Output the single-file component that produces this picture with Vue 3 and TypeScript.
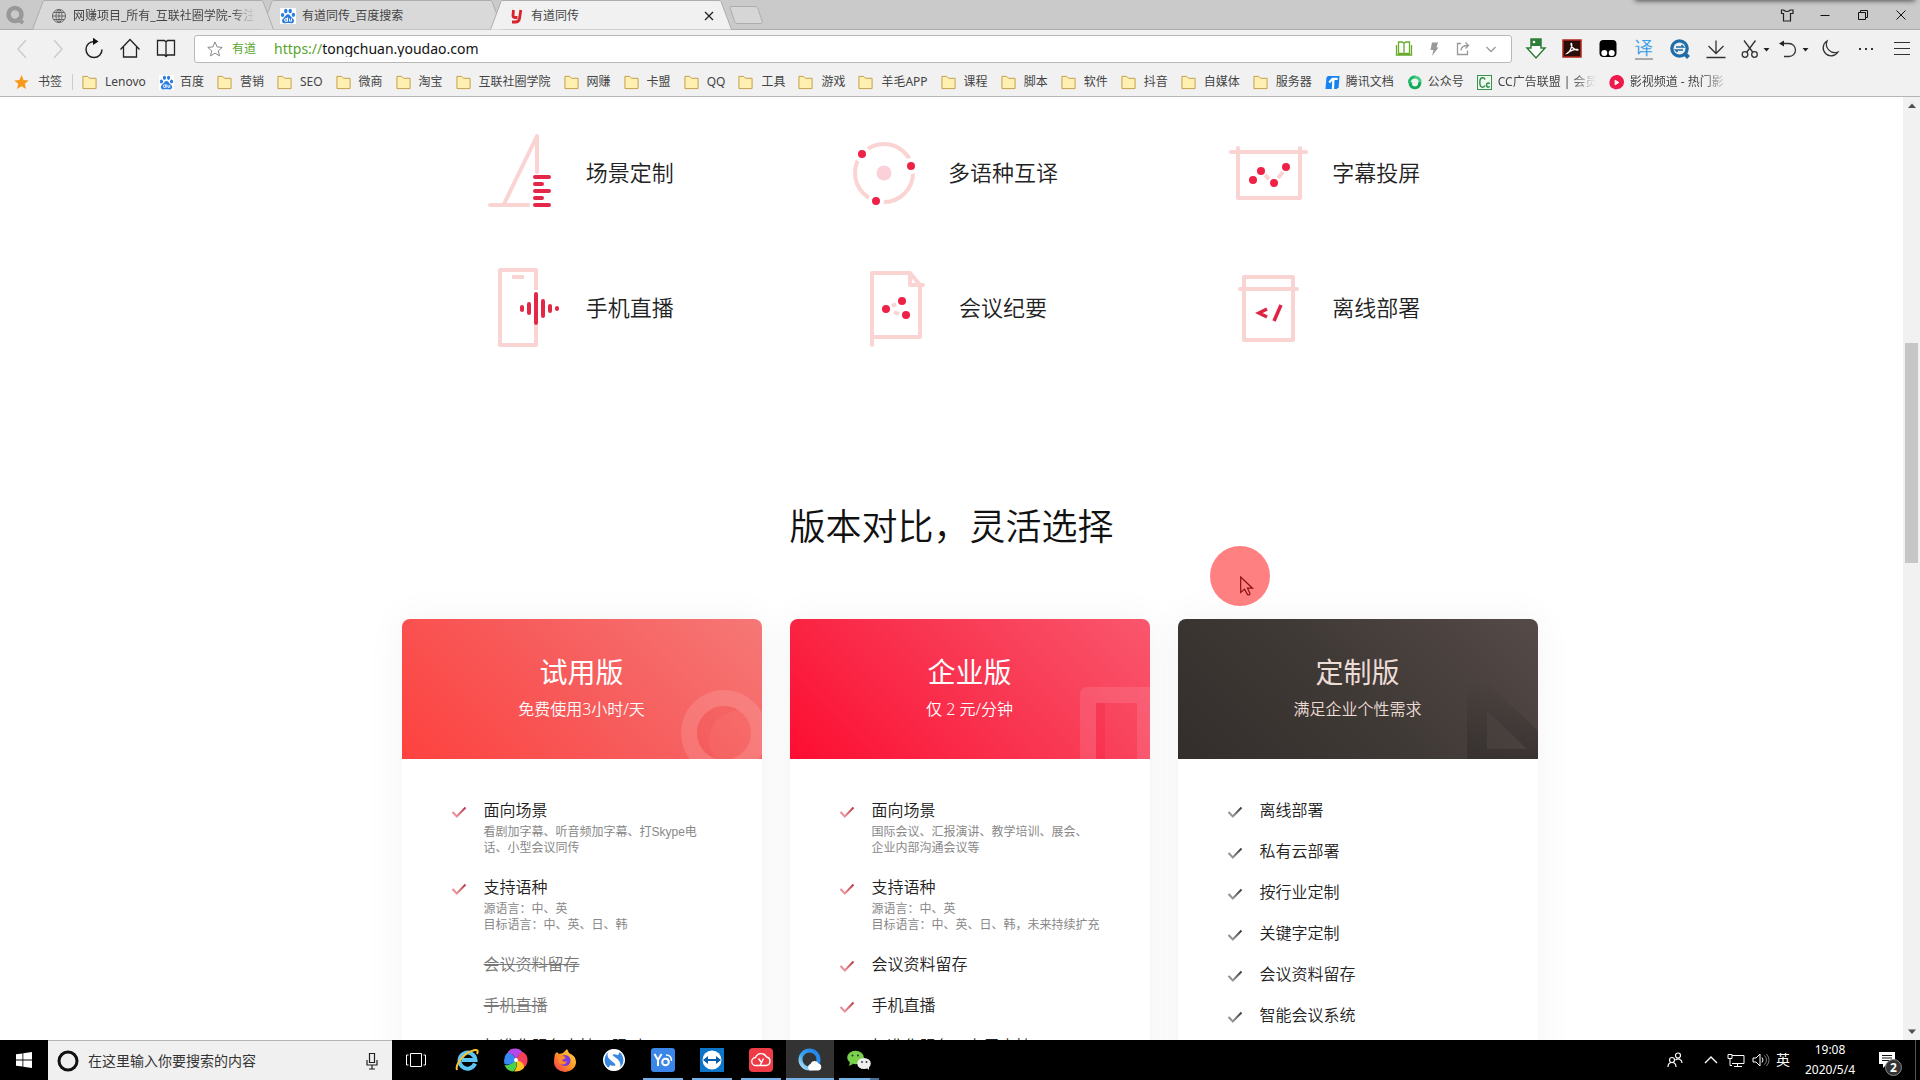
<script setup lang="ts">
interface Tab { title: string; icon: string; active?: boolean; fade?: boolean }
interface Bookmark { label: string; icon: string; fade?: boolean }
interface PlanItem { title: string; lines?: string[]; off?: boolean; plain?: boolean }
interface Plan { name: string; note: string; kind: string; items: PlanItem[] }

const tabs: Tab[] = [
  { title: '网赚项目_所有_互联社圈学院-专注', icon: 'globe', fade: true },
  { title: '有道同传_百度搜索', icon: 'baidu' },
  { title: '有道同传', icon: 'youdao', active: true },
]

const folder = (label: string): Bookmark => ({ label, icon: 'folder' })
const bookmarks: Bookmark[] = [
  folder('Lenovo'),
  { label: '百度', icon: 'baidu' },
  ...['营销', 'SEO', '微商', '淘宝', '互联社圈学院', '网赚', '卡盟', 'QQ', '工具', '游戏', '羊毛APP', '课程', '脚本', '软件', '抖音', '自媒体', '服务器'].map(folder),
  { label: '腾讯文档', icon: 'docs' },
  { label: '公众号', icon: 'mp' },
  { label: 'CC广告联盟 | 会员', icon: 'cc', fade: true },
  { label: '影视频道 - 热门影', icon: 'video', fade: true },
]

const navButtons = [
  { id: 'back', label: '后退' }, { id: 'forward', label: '前进' }, { id: 'reload', label: '刷新' },
  { id: 'home', label: '主页' }, { id: 'book', label: '阅读' },
]
const addressButtons = [
  { id: 'reader', label: '阅读模式' }, { id: 'bolt', label: '极速模式' },
  { id: 'share', label: '分享' }, { id: 'chevron', label: '展开' },
]
const extensions = [
  { id: 'dl', label: '下载助手' }, { id: 'pdf', label: 'PDF' }, { id: 'monkey', label: '脚本管理' },
  { id: 'translate', label: '翻译' }, { id: 'search', label: '搜索' }, { id: 'download', label: '下载' },
  { id: 'cut', label: '截图', wide: true }, { id: 'undo', label: '恢复', wide: true },
  { id: 'moon', label: '夜间' }, { id: 'dots', label: '更多' }, { id: 'menu', label: '菜单' },
]
const windowButtons = [
  { id: 'skin', label: '皮肤' }, { id: 'min', label: '最小化' },
  { id: 'max', label: '还原' }, { id: 'close', label: '关闭' },
]

const features = [
  { name: '场景定制', icon: 'scene' }, { name: '多语种互译', icon: 'lang' }, { name: '字幕投屏', icon: 'screen' },
  { name: '手机直播', icon: 'phone' }, { name: '会议纪要', icon: 'minutes' }, { name: '离线部署', icon: 'offline' },
]

const plans: Plan[] = [
  {
    name: '试用版', note: '免费使用3小时/天', kind: 'trial',
    items: [
      { title: '面向场景', lines: ['看剧加字幕、听音频加字幕、打Skype电', '话、小型会议同传'] },
      { title: '支持语种', lines: ['源语言：中、英', '目标语言：中、英、日、韩'] },
      { title: '会议资料留存', off: true },
      { title: '手机直播', off: true },
      { title: '标准化服务支持，限时', plain: true },
    ],
  },
  {
    name: '企业版', note: '仅 2 元/分钟', kind: 'business',
    items: [
      { title: '面向场景', lines: ['国际会议、汇报演讲、教学培训、展会、', '企业内部沟通会议等'] },
      { title: '支持语种', lines: ['源语言：中、英', '目标语言：中、英、日、韩，未来持续扩充'] },
      { title: '会议资料留存' },
      { title: '手机直播' },
      { title: '标准化服务，专属支持' },
    ],
  },
  {
    name: '定制版', note: '满足企业个性需求', kind: 'custom',
    items: ['离线部署', '私有云部署', '按行业定制', '关键字定制', '会议资料留存', '智能会议系统'].map((title) => ({ title })),
  },
]

const apps = [
  { id: 'ie', label: 'Internet Explorer' }, { id: 'pinwheel', label: '浏览器' }, { id: 'firefox', label: 'Firefox' },
  { id: 'sogou', label: '搜狗' }, { id: 'yo', label: 'Yo', state: 'open' }, { id: 'teamviewer', label: 'TeamViewer', state: 'open' },
  { id: 'ynote', label: '有道', state: 'open' }, { id: 'qq', label: 'QQ浏览器', state: 'current' },
  { id: 'wechat', label: '微信', state: 'open stacked' },
]
</script>

<template>
  <svg class="defs" aria-hidden="true">
    <defs>
      <linearGradient id="gq" x1="1" y1="0" x2="0" y2="1"><stop offset="0" stop-color="#1f7ee8" /><stop offset="0.6" stop-color="#3aa5ee" /><stop offset="1" stop-color="#bfe6fb" /></linearGradient>
      <linearGradient id="gf" x1="1" y1="0" x2="0" y2="1"><stop offset="0" stop-color="#ffe14a" /><stop offset="0.5" stop-color="#ff9421" /><stop offset="1" stop-color="#f5315b" /></linearGradient>
      <linearGradient id="gr" x1="1" y1="0" x2="0" y2="1"><stop offset="0" stop-color="#b93a4a" /><stop offset="1" stop-color="#f3a5ab" /></linearGradient>
      <linearGradient id="gk" x1="1" y1="0" x2="0" y2="1"><stop offset="0" stop-color="#3c3c3c" /><stop offset="1" stop-color="#aaaaaa" /></linearGradient>
      <linearGradient id="gt" x1="0" y1="0" x2="0" y2="1"><stop offset="0.1" stop-color="#2c2725" stop-opacity="0" /><stop offset="1" stop-color="#2c2725" stop-opacity="0.5" /></linearGradient>
    </defs>
    <symbol id="i-globe" viewBox="0 0 16 16"><g fill="none" stroke="#666"><circle cx="8" cy="8" r="6.5" /><ellipse cx="8" cy="8" rx="3" ry="6.5" /><path d="M8 1.5v13M1.5 8h13M2.6 4.5h10.8M2.6 11.5h10.8" /></g></symbol>
    <symbol id="i-baidu" viewBox="0 0 16 16"><rect width="16" height="16" fill="#fff" /><g fill="#2a7de1"><ellipse cx="2.6" cy="7" rx="1.7" ry="2.1" /><ellipse cx="5.8" cy="3" rx="1.7" ry="2.3" /><ellipse cx="10.2" cy="3" rx="1.7" ry="2.3" /><ellipse cx="13.4" cy="6.8" rx="1.7" ry="2.1" /><path d="M8 6.3c2 0 2.4 2 4 3.400 1.600 1.400 2.200 2.200 1.900 3.800-.4 1.700-2 2-3.500 1.800-1.800-.3-3-.3-4.800 0-1.500.2-3.100-.1-3.500-1.800-.3-1.600.3-2.400 1.900-3.800C5.600 8.300 6 6.300 8 6.300z" /></g><g fill="none" stroke="#fff"><circle cx="6" cy="12" r="1.400" /><path d="M7.500 9.500v4M9.500 10.500v2.600h2v-2.600" /></g></symbol>
    <symbol id="i-youdao" viewBox="0 0 16 16"><path d="M4.500 2 4 7.500q0 2 2 2h2.500M11.800 2 10.500 10.500q-.6 3.500-4 3.500H3" fill="none" stroke="#d8242c" stroke-width="2.800" /></symbol>
    <symbol id="i-folder" viewBox="0 0 16 16"><path d="M1 1.500h5l2 2h7v11H1z" fill="#ffefb0" stroke="#c39b45" /></symbol>
    <symbol id="i-docs" viewBox="0 0 16 16"><path d="M3 1h12.500l-1 12-2 2H.500L1.500 3z" fill="#1684ee" /><path d="M9 3.500 8.500 15M4.500 8 8 4h5.500" fill="none" stroke="#fff" stroke-width="2.400" /></symbol>
    <symbol id="i-mp" viewBox="0 0 16 16"><g fill="none" stroke-width="3"><path d="M5.500 9.500Q1.500 9 3 5.500 5 1.500 9 2" stroke="#1fb866" /><path d="M8 2.200q6 .3 6 5.500 0 1.800-1 3" stroke="#4acb85" /><path d="M3 9.500q2 4.500 6 4.300 5-.8 4.300-6" stroke="#12a957" /></g></symbol>
    <symbol id="i-cc" viewBox="0 0 16 16"><rect x=".5" y=".5" width="15" height="15" fill="#eefaf0" stroke="#2e8b45" /><path d="M8.500 5Q8 3 6 3 3 3 3 8t3 5q2 0 2.500-2M13.500 9.500Q13 8.500 12 8.500q-1.800 0-1.800 2.200T12 13q1 0 1.500-1" fill="none" stroke="#2e8b45" stroke-width="1.500" /></symbol>
    <symbol id="i-video" viewBox="0 0 16 16"><path d="M8 0a7.500 7.500 0 0 1 1 15Q7 16 6 15 0 14 .5 8 1 1 8 0z" fill="#f0194c" /><path d="M6.500 5.500 10.500 8l-4 2.500z" fill="#fff" stroke="#fff" stroke-linejoin="round" /></symbol>

    <symbol id="i-back" viewBox="0 0 24 24"><path d="m16 3-8 9 8 9" fill="none" stroke="#c9c9c9" stroke-width="1.300" /></symbol>
    <symbol id="i-forward" viewBox="0 0 24 24"><path d="m8 3 8 9-8 9" fill="none" stroke="#c9c9c9" stroke-width="1.300" /></symbol>
    <symbol id="i-reload" viewBox="0 0 24 24"><path d="M12 4.500a8 8 0 1 0 8 8" fill="none" stroke="#222" stroke-width="1.500" /><path d="m11 .8 5.500 3.700L11 8z" fill="#111" /></symbol>
    <symbol id="i-home" viewBox="0 0 24 24"><path d="m2.500 12.500 9.500-10 9.500 10M5.500 10v10h13V10" fill="none" stroke="#222" stroke-width="1.300" /></symbol>
    <symbol id="i-book" viewBox="0 0 24 24"><path d="M12 5 10.500 3.500H3.500v14.500h7L12 19.500l1.500-1.500h7V3.500h-7zM12 5v14.500" fill="none" stroke="#222" stroke-width="1.300" /></symbol>
    <symbol id="i-download" viewBox="0 0 24 24"><path d="M12 3.500v13M4.500 9 12 16.500 19.500 9M2.500 20.500h19" fill="none" stroke="#333" stroke-width="1.300" /></symbol>
    <symbol id="i-moon" viewBox="0 0 24 24"><path d="M9 4a8 8 0 1 0 11 11A8.500 8.500 0 0 1 9 4z" fill="none" stroke="#333" stroke-width="1.300" /></symbol>
    <symbol id="i-menu" viewBox="0 0 24 24"><path d="M4 5.500h16M4 11.500h16M4 17.500h16" fill="none" stroke="#333" stroke-width="1.200" /></symbol>
    <symbol id="i-reader" viewBox="0 0 24 24"><path d="M12 6.500 10.500 5H6.500v11.500h4L12 18l1.500-1.500h4V5h-4zM12 6.500V18M4.500 8v10h15V8" fill="none" stroke="#68ab2c" stroke-width="1.300" /></symbol>
    <symbol id="i-bolt" viewBox="0 0 24 24"><path d="M11 5.500h6l-1.500 5h2L11 19l1.500-6h-3z" fill="#999" /></symbol>
    <symbol id="i-share" viewBox="0 0 24 24"><path d="M11 6.500H7.500v11h10v-4M11 13.500q0-5 7-5M15.500 5.500l3 3-3 3" fill="none" stroke="#999" stroke-width="1.300" /></symbol>
    <symbol id="i-chevron" viewBox="0 0 24 24"><path d="m7.500 10 4.500 4.500 4.500-4.500" fill="none" stroke="#999" stroke-width="1.300" /></symbol>
    <symbol id="i-dl" viewBox="0 0 24 24"><path d="M7 2h10v9h4l-9 10-9-10h4z" fill="#fff" stroke="#2f7d3b" stroke-width="1.500" /><path d="M7 2h10v7H7z" fill="#2f7d3b" /><circle cx="10" cy="5" r="1.300" fill="#fff" /></symbol>
    <symbol id="i-pdf" viewBox="0 0 24 24"><rect x="3" y="3" width="18" height="17" fill="#2a0c08" stroke="#b5271c" stroke-width="1.500" /><path d="M7 16.500c2-.5 5.500-6 4.800-9.500-1-2-1.500 1 .7 3.500 2 2.300 4 3 5.500 2.500.5-1.500-7-.8-11 3.500z" fill="none" stroke="#fff" stroke-width="1.200" /></symbol>
    <symbol id="i-monkey" viewBox="0 0 24 24"><rect x="3.500" y="3" width="17" height="17" rx="4" fill="#000" /><circle cx="8.300" cy="16" r="3" fill="#fff" /><circle cx="15.700" cy="16" r="3" fill="#fff" /></symbol>
    <symbol id="i-search" viewBox="0 0 24 24"><circle cx="11.500" cy="11.500" r="9.300" fill="#1f6ca8" /><path d="m16 16 4.500 4.500" stroke="#1f6ca8" stroke-width="4" /><circle cx="11.500" cy="11.500" r="6" fill="#eee" /><path d="M8 10h7.500l-2-2M15 13H7.500l2 2" fill="none" stroke="#1f6ca8" stroke-width="1.500" /></symbol>
    <symbol id="i-cut" viewBox="0 0 39 24"><g fill="none" stroke="#333" stroke-width="1.300"><circle cx="11" cy="17.500" r="2.800" /><circle cx="20.500" cy="17.500" r="2.800" /><path d="m10 3.500 9 12M21.500 3.500l-9 12" /></g><path d="M29.500 11h6l-3 3.500z" fill="#222" /></symbol>
    <symbol id="i-undo" viewBox="0 0 39 24"><path d="M11 19.500h5a6.500 6.500 0 0 0 0-13H9" fill="none" stroke="#333" stroke-width="1.300" /><path d="m6 6.500 5-3v6z" fill="#222" /><path d="M29.500 11h6l-3 3.500z" fill="#222" /></symbol>
    <symbol id="i-dots" viewBox="0 0 24 24"><path d="M5 11h2v2H5zM11 11h2v2h-2zM17 11h2v2h-2z" fill="#333" /></symbol>
    <symbol id="i-skin" viewBox="0 0 24 24"><path d="M8.500 7H6.500v3.500h2V18h7v-7.500h2.500V7h-2.500q-3.500 3-7 0z" fill="none" stroke="#222" stroke-width="1.200" /></symbol>
    <symbol id="i-min" viewBox="0 0 24 24"><path d="M7.500 12.500h9" stroke="#111" /></symbol>
    <symbol id="i-max" viewBox="0 0 24 24"><path d="M7.500 9.500h7v7h-7zM9.500 9.500v-2h7v7h-2" fill="none" stroke="#111" /></symbol>
    <symbol id="i-close" viewBox="0 0 24 24"><path d="m7.500 7.500 9 9M16.500 7.500l-9 9" stroke="#111" /></symbol>
    <symbol id="i-star" viewBox="0 0 16 16"><path d="m8 1 2.100 4.900 5.100.5-3.900 3.400 1.200 5.100L8 12.200l-4.500 2.700 1.200-5.100L.8 6.400l5.100-.5z" /></symbol>

    <symbol id="f-scene" viewBox="0 0 88 88"><path d="M7 77h38M21 76 54 8v36" fill="none" stroke="#fad4d3" stroke-width="4" stroke-linecap="round" stroke-linejoin="round" /><path d="M52 49h14M52 56h7M52 63h14M52 70h7M52 77h14" stroke="#e32847" stroke-width="4" stroke-linecap="round" /></symbol>
    <symbol id="f-lang" viewBox="0 0 88 88"><circle cx="39" cy="45" r="29" fill="none" stroke="#fad4d3" stroke-width="4" /><circle cx="39" cy="45" r="7.500" fill="#fbd0d9" /><g fill="#ee2246" stroke="#fff" stroke-width="4"><circle cx="17" cy="26" r="6" /><circle cx="66" cy="38" r="6" /><circle cx="31" cy="73" r="6" /></g></symbol>
    <symbol id="f-screen" viewBox="0 0 88 88"><path d="M2 24h75M9 20v50h62V20" fill="none" stroke="#fad4d3" stroke-width="4" stroke-linecap="round" stroke-linejoin="round" /><path d="m36 47 4 4M49 50l5-6" stroke="#fad4d3" stroke-width="4" /><g fill="#ee2246"><circle cx="24" cy="52" r="4" /><circle cx="32" cy="43" r="4" /><circle cx="45" cy="55" r="4" /><circle cx="57" cy="39" r="4" /></g></symbol>
    <symbol id="f-phone" viewBox="0 0 88 88"><path d="M53 25V7H17v75h36V64M31 14h8" fill="none" stroke="#fad4d3" stroke-width="4" stroke-linecap="square" stroke-linejoin="round" /><path d="M39 44v3M46 41v9M53 31v29M60 38v15M67 43v5M74 45v1" stroke="#e32847" stroke-width="4" stroke-linecap="round" /></symbol>
    <symbol id="f-minutes" viewBox="0 0 88 88"><path d="M16 82V10h38l10 12v52H17M54 10v12h13" fill="none" stroke="#fad4d3" stroke-width="4" stroke-linecap="round" stroke-linejoin="round" /><path d="m36 43 4-2M38 49l5 2" stroke="#fad4d3" stroke-width="4" /><g fill="#ee2246"><circle cx="30" cy="46" r="4" /><circle cx="46" cy="38" r="4" /><circle cx="50" cy="52" r="4" /></g></symbol>
    <symbol id="f-offline" viewBox="0 0 88 88"><path d="M15 14h49v63H15zM11 26h57" fill="none" stroke="#fad4d3" stroke-width="4" stroke-linecap="round" stroke-linejoin="round" /><path d="m38 46-8 4 8 4M52 42l-7 16" fill="none" stroke="#e02445" stroke-width="3.500" /></symbol>

    <symbol id="t-ie" viewBox="0 0 24 24"><path d="M20 15.500a8 8 0 1 1 .5-3.500H7" fill="none" stroke="#5cc7f5" stroke-width="4" /><path d="M2 22C0 17 9 4 20 2q4-.5 2 4" fill="none" stroke="#f7c52e" stroke-width="2" /></symbol>
    <symbol id="t-pinwheel" viewBox="0 0 24 24"><path d="M12 12Q9 4 3 6 5 0 12 .500 18 1 19 6q-5-1-7 6z" fill="#b548e8" /><path d="M12 12q3-8 7-8 5 3 4.500 9-.5 5-4.500 7 0-6-7-8z" fill="#f5405c" /><path d="M12 12q9 2 8 8-4 4-10 3.500 4-4 2-11.500z" fill="#ffc31f" /><path d="M12 12q2 8-3 11.500-6-.5-8.500-6.500 6 1 11.500-5z" fill="#4bd14c" /><path d="M12 12q-5 6-11.500 4Q-1 9 3 5q6-1 9 7z" fill="#3689f5" /><circle cx="12" cy="12" r="2" fill="#fff" /></symbol>
    <symbol id="t-firefox" viewBox="0 0 24 24"><path d="M2 6l2-2 2 2 4-1 4-4 2 4q7 3 7 9a11 10 0 0 1-22 0Q1 10 2 6z" fill="url(#gf)" /><circle cx="12" cy="12.500" r="5.500" fill="#7a3be0" /><path d="M5 8q5-2 8 2l-4 2q2 3 5 1-2 6-8 2z" fill="#ff8a2a" /></symbol>
    <symbol id="t-sogou" viewBox="0 0 24 24"><circle cx="12" cy="12" r="11" fill="#fff" /><circle cx="12" cy="12" r="9.500" fill="#3a87e0" /><path d="M17 5q-8-3-9 2c0 4 8 5 8 10 0 4-6 4-9 2" fill="none" stroke="#fff" stroke-width="5" /></symbol>
    <symbol id="t-yo" viewBox="0 0 24 24"><rect width="24" height="24" rx="3" fill="#3a87e8" /><g fill="none" stroke="#fff" stroke-width="2"><path d="m3.500 6 3.500 6 3.500-6M7 12v6" /><circle cx="14.500" cy="14" r="3.300" /><path d="M15 7q5.500 0 5.500 6M15 10.500q2.500 0 2.500 2.500" stroke-width="1.500" /></g></symbol>
    <symbol id="t-teamviewer" viewBox="0 0 24 24"><rect width="24" height="24" fill="#0e76c9" /><circle cx="12" cy="12" r="9.500" fill="#fff" /><path d="m3 12 5-4v3h8V8l5 4-5 4v-3H8v3z" fill="#0d5ca8" /></symbol>
    <symbol id="t-ynote" viewBox="0 0 24 24"><rect width="24" height="24" rx="4" fill="#ee3b46" /><path d="M7 17.500a4 4 0 0 1-.5-8A6 6 0 0 1 17.500 9a4.300 4.300 0 0 1-.5 8.500zM9.500 10.500l2.500 3.500M14.500 10.500l-3.500 7" fill="none" stroke="#fff" stroke-width="1.400" /></symbol>
    <symbol id="t-qq" viewBox="0 0 24 24"><circle cx="11.500" cy="11.500" r="9" fill="none" stroke="url(#gq)" stroke-width="4" /><path d="M12 22.500a3.500 3.500 0 0 1 .5-6.500 4.300 4.300 0 0 1 8-.5 3.600 3.600 0 0 1 0 7z" fill="#fff" /></symbol>
    <symbol id="t-wechat" viewBox="0 0 24 24"><ellipse cx="8.500" cy="9.500" rx="8.300" ry="6.700" fill="#79d14a" /><path d="m3 14-1 4 4-2z" fill="#79d14a" /><ellipse cx="17" cy="15.500" rx="6.800" ry="5.500" fill="#eee" /><path d="m19 19 3 3v-4z" fill="#eee" /><g fill="#234"><circle cx="5.500" cy="7.500" r="1" /><circle cx="11" cy="7.500" r="1" /><circle cx="15" cy="14" r=".9" /><circle cx="19.500" cy="14" r=".9" /></g></symbol>
  </svg>

  <div class="desktop">
    <header class="chrome">
      <div class="tabbar">
        <svg class="logo" viewBox="0 0 20 20"><circle cx="10" cy="9.500" r="6.500" fill="none" stroke="#999" stroke-width="4.500" /><path d="m12 13 6 5" stroke="#999" stroke-width="4" /></svg>
        <nav class="tabs">
          <a v-for="t in tabs" :key="t.title" href="#" class="tab" :class="{ active: t.active }">
            <svg class="tab-shape" viewBox="0 0 242 30" preserveAspectRatio="none"><path d="M0.500 29.500 11 1.500q.5-1 2-1h216q1.500 0 2 1L241.500 29.500" :fill="t.active ? '#f1f1f1' : '#d9d9d9'" stroke="#adadad" /></svg>
            <svg class="fav"><use :href="'#i-' + t.icon" /></svg>
            <span class="tab-title" :class="{ fade: t.fade }">{{ t.title }}</span>
            <svg v-if="t.active" class="tab-close" viewBox="0 0 10 10"><path d="m1 1 8 8M9 1 1 9" stroke="#222" stroke-width="1.300" /></svg>
          </a>
          <button class="new-tab" aria-label="新标签页"><svg viewBox="0 0 34 18"><path d="M1 1.500Q1 .5 2 .5h25q1 0 1.500 1l5 14.500q0 1-1 1.500H8q-1.500 0-2-1z" fill="#d6d6d6" stroke="#adadad" /></svg></button>
        </nav>
        <div class="window-buttons">
          <button v-for="b in windowButtons" :key="b.id" class="wbtn" :aria-label="b.label"><svg class="i24"><use :href="'#i-' + b.id" /></svg></button>
        </div>
        <div class="edge-shadow"></div>
      </div>

      <div class="toolbar">
        <button v-for="b in navButtons" :key="b.id" class="tbtn" :aria-label="b.label"><svg class="i24"><use :href="'#i-' + b.id" /></svg></button>
        <form class="address" @submit.prevent>
          <svg class="addr-star"><use href="#i-star" /></svg>
          <span class="site">有道</span>
          <label class="scheme" for="url">https://</label>
          <input id="url" class="url" type="text" value="tongchuan.youdao.com" />
          <button v-for="b in addressButtons" :key="b.id" type="button" class="abtn" :aria-label="b.label"><svg class="i24"><use :href="'#i-' + b.id" /></svg></button>
        </form>
        <button v-for="b in extensions" :key="b.id" class="tbtn" :class="{ wide: b.wide }" :aria-label="b.label">
          <span v-if="b.id === 'translate'" class="yi">译</span>
          <svg v-else :class="b.wide ? 'i39' : 'i24'"><use :href="'#i-' + b.id" /></svg>
        </button>
      </div>

      <nav class="bookmarks">
        <a href="#" class="bm first"><svg class="bm-star"><use href="#i-star" /></svg>书签</a>
        <a v-for="b in bookmarks" :key="b.label" href="#" class="bm" :class="{ site: b.icon !== 'folder' }">
          <svg class="bm-icon"><use :href="'#i-' + b.icon" /></svg><span :class="{ fade: b.fade }">{{ b.label }}</span>
        </a>
      </nav>
    </header>

    <div class="viewport">
      <main class="page">
        <ul class="features">
          <li v-for="f in features" :key="f.name" class="feature"><svg class="f-icon"><use :href="'#f-' + f.icon" /></svg>{{ f.name }}</li>
        </ul>
        <h2 class="heading">版本对比，灵活选择</h2>
        <div class="plans">
          <section v-for="p in plans" :key="p.kind" class="plan">
            <header class="plan-head" :class="p.kind">
              <svg v-if="p.kind === 'trial'" class="deco" viewBox="0 0 100 100"><circle cx="62" cy="74" r="35" fill="none" stroke="#fff" stroke-opacity=".13" stroke-width="16" /><path d="M35 74a27 27 0 0 1 41-23Q46 56 47 86q2 8 8 14Q35 94 35 74z" fill="#e33" fill-opacity=".1" /></svg>
              <svg v-else-if="p.kind === 'business'" class="deco" viewBox="0 0 100 100"><path d="M30 100V36q0-8 8-8h62v72H87V44H46v56z" fill="#fff" fill-opacity=".11" /><path d="M46 44h9v56h-9z" fill="#f00030" fill-opacity=".15" /></svg>
              <svg v-else class="deco" viewBox="0 0 100 100"><path d="M29 100V16q3-10 12 0l59 56v28zM49 52v38h40z" fill="url(#gt)" fill-rule="evenodd" /></svg>
              <h3>{{ p.name }}</h3>
              <p>{{ p.note }}</p>
            </header>
            <ul class="plan-list">
              <li v-for="i in p.items" :key="i.title" :class="{ off: i.off }">
                <svg v-if="!i.off && !i.plain" class="check" viewBox="0 0 16 12"><path d="m1.500 6 4.300 4.500L14.500 1.500" fill="none" :stroke="p.kind === 'custom' ? 'url(#gk)' : 'url(#gr)'" stroke-width="2" /></svg>
                <span class="item-title">{{ i.title }}</span>
                <p v-if="i.lines" class="item-desc"><span v-for="l in i.lines" :key="l">{{ l }}</span></p>
              </li>
            </ul>
          </section>
        </div>
      </main>
      <div class="scrollbar">
        <svg viewBox="0 0 16 16"><path d="M4 10.500h8L8 6z" fill="#505050" /></svg>
        <div class="thumb"></div>
        <svg viewBox="0 0 16 16"><path d="M4 6h8l-4 4.500z" fill="#505050" /></svg>
      </div>
    </div>

    <footer class="taskbar">
      <button class="start" aria-label="开始"><svg viewBox="0 0 16 16"><path d="M0 2.300 6.500 1.400v6.200H0zM7.300 1.300 16 0v7.600H7.300zM0 8.400h6.500v6.200L0 13.700zM7.300 8.400H16V16l-8.700-1.300z" fill="#fff" /></svg></button>
      <label class="search">
        <svg class="cortana" viewBox="0 0 22 22"><circle cx="11" cy="11" r="9" fill="none" stroke="#111" stroke-width="3" /></svg>
        <input type="text" placeholder="在这里输入你要搜索的内容" />
        <svg class="mic" viewBox="0 0 12 18"><path d="M3.500 1.500h5v9h-5zM1 8v5h10V8M6 13v4M3 17h6" fill="none" stroke="#222" stroke-width="1.200" /></svg>
      </label>
      <button class="taskview" aria-label="任务视图"><svg viewBox="0 0 20 16"><path d="M4.500 1.500h11v13h-11zM2.500 3h-2v10h2M17.500 3h2v10h-2" fill="none" stroke="#fff" /></svg></button>
      <div class="apps">
        <button v-for="a in apps" :key="a.id" class="app" :class="a.state" :aria-label="a.label"><svg class="i24"><use :href="'#t-' + a.id" /></svg></button>
      </div>
      <div class="tray">
        <svg class="t-people" viewBox="0 0 16 16"><g fill="none" stroke="#fff" stroke-width="1.200"><circle cx="5" cy="8" r="2.500" /><circle cx="11" cy="3.500" r="2.500" /><path d="M1 15q0-4.500 4-4.500T9 15M8.500 8q2.500-2 4.500-.5 2 1 2 3.500" /></g></svg>
        <svg class="t-up" viewBox="0 0 14 8"><path d="m1 7 6-6 6 6" fill="none" stroke="#fff" stroke-width="1.400" /></svg>
        <svg class="t-net" viewBox="0 0 18 14"><path d="M5 2.500h12v8H5M1 1.500h4v4H1zM3 5.500v7h2M10.500 10.500v3M7 13.500h8" fill="none" stroke="#fff" /></svg>
        <svg class="t-vol" viewBox="0 0 18 14"><path d="M1 5h3l4-4v12L4 9H1z" fill="none" stroke="#fff" /><path d="M10 4.500q2 2.500 0 5" fill="none" stroke="#fff" /><path d="M12.500 2.500q4 4.500 0 9M14.500 1q5 6 0 12" fill="none" stroke="#777" /></svg>
        <span class="ime">英</span>
        <time class="clock"><span>19:08</span><span>2020/5/4</span></time>
        <span class="notice"><svg viewBox="0 0 16 16"><path d="M0 0h16v12H8l-4 4v-4H0z" fill="#fff" /><path d="M3 3.500h10M3 6h10M3 8.500h7" stroke="#111" /></svg><b>2</b></span>
      </div>
    </footer>

    <div class="pointer"><svg viewBox="0 0 14 20"><path d="M.7 1v15.500l3.800-3.400 3 5.500q2.200 1 2.500-1L7.500 12.200h5z" fill="#ff8080" stroke="#8c0f14" stroke-width="1.200" /></svg></div>
  </div>
</template>

<style>
body { margin: 0; overflow: hidden; }
</style>

<style scoped>
* { box-sizing: border-box; }
.defs { position: absolute; width: 0; height: 0; }
.desktop { position: relative; display: flex; flex-direction: column; height: 100vh; overflow: hidden; background: #fff; color: #333; font: 12px/16px "Noto Sans", "Noto Sans CJK SC", sans-serif; }
button { padding: 0; border: 0; background: none; display: flex; align-items: center; justify-content: center; flex: none; }
a { color: inherit; text-decoration: none; }
svg { display: block; flex: none; }
ul, h2, h3, p { margin: 0; padding: 0; font-weight: 400; list-style: none; }
input { border: 0; outline: 0; padding: 0; background: transparent; font: inherit; min-width: 0; }
.i24 { width: 24px; height: 24px; }
.i39 { width: 39px; height: 24px; }
.fade { overflow: hidden; -webkit-mask-image: linear-gradient(to left, transparent, #000 24px); mask-image: linear-gradient(to left, transparent, #000 24px); }

.chrome { flex: none; background: #f1f1f1; border-bottom: 1px solid #b5b5b5; }
.tabbar { position: relative; display: flex; height: 30px; background: #cacaca; box-shadow: inset 0 -1px #adadad; overflow: hidden; }
.logo { width: 20px; height: 20px; margin: 5px 7px 5px 5px; }
.tabs { display: flex; flex: 1; }
.tab { position: relative; display: flex; align-items: center; width: 242px; height: 30px; margin-right: -13px; padding: 1px 18px 0 19px; gap: 6px; z-index: 1; color: #444; }
.tab:first-child { z-index: 2; }
.tab.active { z-index: 3; }
.tab-shape { position: absolute; left: 0; top: 0; width: 100%; height: 100%; z-index: -1; }
.fav { width: 16px; height: 16px; }
.tab-title { flex: 1; white-space: nowrap; }
.tab-title.fade { flex: 0 1 182px; }
.tab-close { width: 10px; height: 10px; }
.new-tab { width: 34px; height: 30px; margin-left: 10px; }
.new-tab svg { width: 34px; height: 18px; }
.window-buttons { display: flex; }
.wbtn { width: 38px; height: 30px; }
.edge-shadow { position: absolute; right: 6px; top: -6px; width: 278px; height: 6px; box-shadow: 0 0 5px 1px rgba(0, 0, 0, .6); }

.toolbar { display: flex; align-items: center; height: 38px; padding-left: 4px; }
.tbtn { width: 36px; height: 36px; }
.tbtn.wide { width: 39px; }
.address { display: flex; align-items: center; flex: 1; min-width: 0; height: 28px; margin: 0 6px 0 10px; padding: 0 6px 0 12px; background: #fff; border: 1px solid #b8b8b8; border-radius: 3px; font-size: 14px; }
.addr-star { width: 16px; height: 16px; fill: none; stroke: #888; overflow: visible; }
.address .site { margin: 0 18px 0 9px; font-size: 12px; color: #59a52c; }
.scheme { color: #59a52c; }
.url { flex: 1; color: #111; }
.abtn { width: 29px; height: 26px; }
.yi { font-size: 18px; line-height: 20px; color: #3a9ee8; border-bottom: 2px solid #aaa; }

.bookmarks { display: flex; align-items: center; height: 28px; padding: 0 0 0 13px; gap: 13px; color: #444; white-space: nowrap; overflow: hidden; }
.bm { display: flex; align-items: center; gap: 8px; flex: none; }
.bm.site { gap: 6px; }
.bm .fade { width: 98px; }
.bm.first { padding-right: 10px; margin-right: -4px; border-right: 1px solid #ccc; }
.bm-star { width: 17px; height: 16px; fill: #f79a1c; }
.bm-icon { width: 15px; height: 15px; }

.viewport { display: flex; flex: 1; min-height: 0; overflow: hidden; }
.page { flex: 1; min-width: 0; padding-top: 31px; overflow: hidden; background: #fff; }
.features { display: grid; grid-template-columns: repeat(3, 1fr); row-gap: 47px; max-width: 1120px; margin: 0 auto; }
.feature { display: flex; align-items: center; justify-content: center; gap: 15px; font-size: 22px; line-height: 32px; font-weight: 350; color: #222; }
.f-icon { width: 88px; height: 88px; }
.heading { margin: 149px 0 65px; text-align: center; font-size: 36px; line-height: 54px; font-weight: 350; color: #111; }
.plans { display: flex; gap: 28px; max-width: 1100px; margin: 0 auto; }
.plan { flex: none; width: 360px; min-height: 560px; border-radius: 8px; background: #fff; box-shadow: 0 0 40px rgba(0, 0, 0, .05); }
.plan-head { position: relative; height: 140px; padding-top: 32px; border-radius: 8px 8px 0 0; overflow: hidden; text-align: center; color: #fff; }
.plan-head h3 { font-size: 28px; line-height: 42px; }
.plan-head p { margin-top: 4px; font-size: 16px; line-height: 24px; font-weight: 350; }
.trial { background: linear-gradient(45deg, #fd423f, #f75c5c 50%, #f57876); }
.business { background: linear-gradient(45deg, #fd0d31, #f93450 50%, #f9576d); }
.custom { background: linear-gradient(45deg, #332d2b, #403a37 50%, #554a48); color: #ecdcd6; }
.deco { position: absolute; right: 0; bottom: 0; width: 100px; height: 100px; }
.plan-list { display: flex; flex-direction: column; gap: 17px; padding: 39px 40px 40px 82px; }
.plan-list li { position: relative; }
.check { position: absolute; left: -33px; top: 8px; width: 16px; height: 12px; }
.item-title { display: block; font-size: 16px; line-height: 24px; font-weight: 350; color: #222; }
.off .item-title { color: #777; text-decoration: line-through; }
.item-desc { padding: 2px 0; color: #888; white-space: nowrap; font-family: "Liberation Sans", "Noto Sans CJK SC", sans-serif; }
.item-desc span { display: block; }
.scrollbar { display: flex; flex-direction: column; align-items: center; width: 17px; flex: none; background: #f1f1f1; }
.scrollbar svg { width: 16px; height: 17px; }
.thumb { width: 13px; height: 220px; margin: 229px 0 auto; background: #c6c6c6; }

.taskbar { display: flex; flex: none; height: 40px; background: #000; color: #fff; }
.start { width: 48px; }
.start svg { width: 16px; height: 16px; }
.search { display: flex; align-items: center; width: 344px; padding: 0 14px 0 9px; background: #f0f0f0; border-top: 1px solid #b5b5b5; font-size: 14px; }
.search input { flex: 1; margin-left: 9px; }
.search input::placeholder { color: #333; opacity: 1; }
.cortana { width: 22px; height: 22px; }
.mic { width: 12px; height: 18px; }
.taskview { width: 48px; }
.taskview svg { width: 20px; height: 16px; }
.apps { display: flex; gap: 1px; margin-left: 3px; }
.app { position: relative; width: 48px; }
.app.current { background: #333; }
.app.open::after, .app.current::after { content: ""; position: absolute; left: 4px; right: 4px; bottom: 0; height: 2px; background: #76b2e8; }
.app.current::after { left: 0; right: 0; }
.app.stacked::after { background: linear-gradient(to right, #76b2e8 31px, #4a7199 31px); }
.tray { display: flex; align-items: center; margin-left: auto; padding-right: 4px; }
.t-people { width: 16px; height: 16px; margin-right: 21px; }
.t-up { width: 14px; height: 8px; margin-right: 9px; }
.t-net { width: 18px; height: 14px; margin-right: 7px; }
.t-vol { width: 18px; height: 14px; margin-right: 6px; }
.ime { font-size: 14px; }
.clock { display: flex; flex-direction: column; width: 80px; line-height: 20px; text-align: center; }
.notice { position: relative; display: flex; align-items: center; width: 46px; height: 40px; padding-left: 9px; border-right: 1px solid #555; }
.notice svg { width: 16px; height: 16px; }
.notice b { position: absolute; left: 15px; top: 19px; width: 17px; height: 17px; border: 1px solid #888; border-radius: 50%; background: #333; line-height: 15px; text-align: center; }

.pointer { position: absolute; left: 1210px; top: 546px; width: 60px; height: 60px; border-radius: 50%; background: #ff8080; }
.pointer svg { position: absolute; left: 30px; top: 30px; width: 14px; height: 20px; }
</style>
